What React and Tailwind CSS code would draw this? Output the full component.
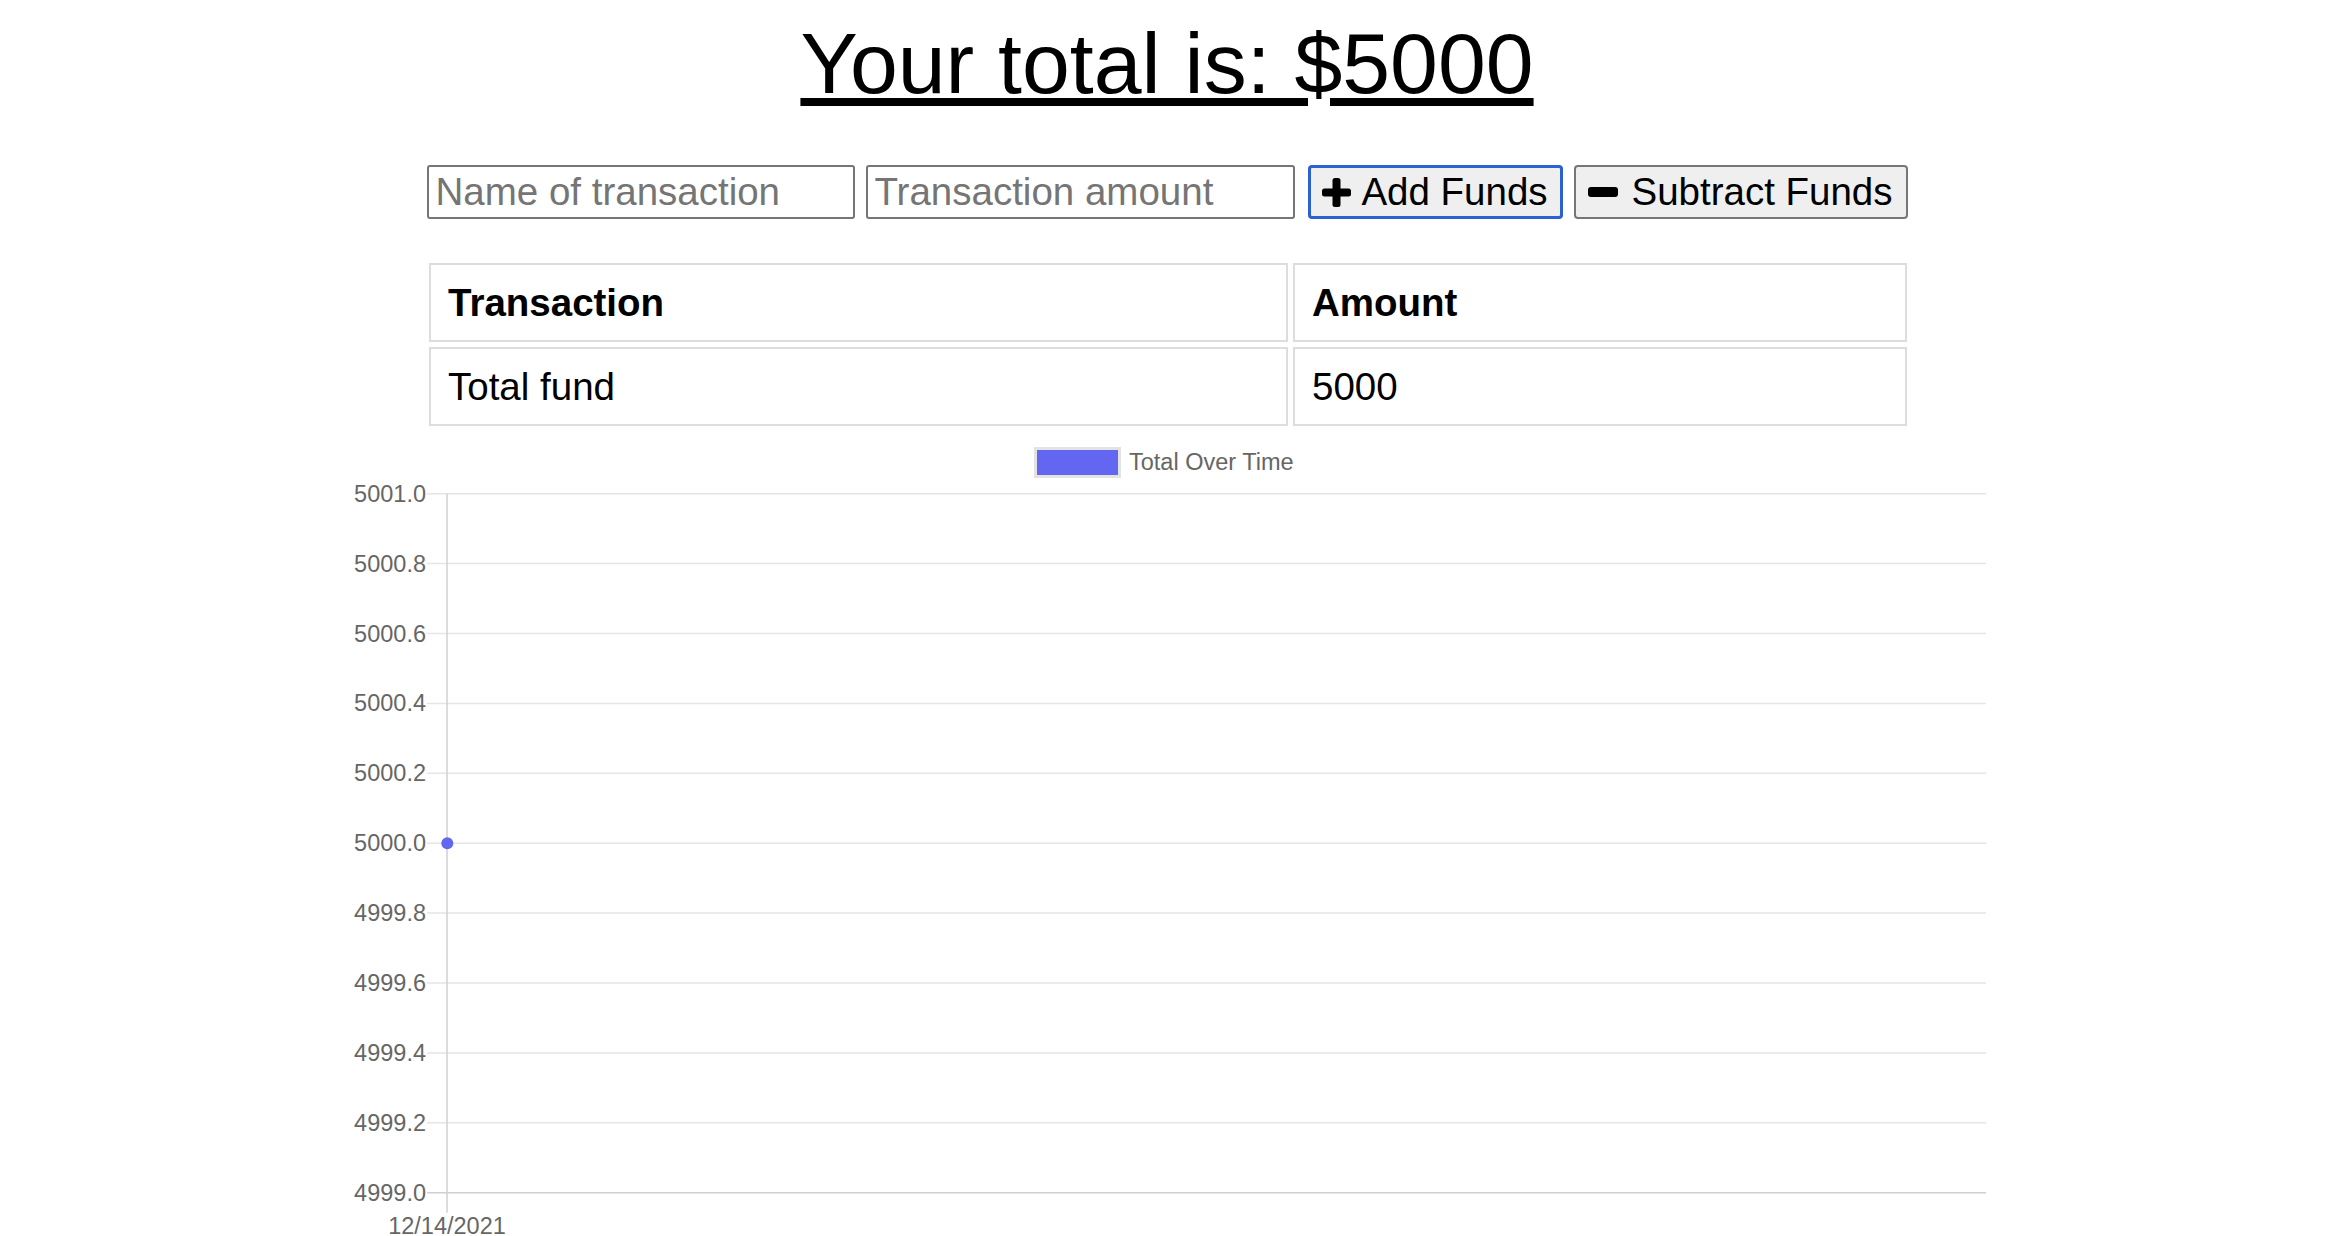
import React from "react";

const ticks = ["5001.0", "5000.8", "5000.6", "5000.4", "5000.2", "5000.0", "4999.8", "4999.6", "4999.4", "4999.2", "4999.0"];

const PlusIcon = () => (
  <svg width="29" height="29" viewBox="0 0 29 29" className="shrink-0">
    <rect x="0" y="10.5" width="29" height="8" rx="2.5" fill="#000" />
    <rect x="10.5" y="0" width="8" height="29" rx="2.5" fill="#000" />
  </svg>
);

const MinusIcon = () => (
  <svg width="30" height="10" viewBox="0 0 30 10" className="shrink-0">
    <rect x="0" y="0" width="30" height="10" rx="3" fill="#000" />
  </svg>
);

const Chart = () => {
  const top = 63.7;
  const step = 69.9;
  return (
    <svg width="1670" height="806" viewBox="0 0 1670 806" className="block">
      {/* legend */}
      <rect x="695.5" y="18.5" width="84" height="28" fill="#6366f1" stroke="#e3e3e3" strokeWidth="3" />
      <text x="789" y="40" fontSize="23.5" fill="#666" fontFamily="Liberation Sans, Arial, sans-serif">
        Total Over Time
      </text>

      {ticks.map((t, i) => {
        const y = top + i * step;
        const last = i === ticks.length - 1;
        return (
          <g key={t}>
            <line x1="87" x2="1646" y1={y} y2={y} stroke={last ? "#cfcfcf" : "#e5e5e5"} strokeWidth="1.5" />
            <text
              x="86"
              y={y + 8}
              textAnchor="end"
              fontSize="23.5"
              fill="#666"
              fontFamily="Liberation Sans, Arial, sans-serif"
            >
              {t}
            </text>
          </g>
        );
      })}

      <line x1="107" x2="107" y1={top} y2="782.7" stroke="#d0d0d0" strokeWidth="1.5" />

      <text x="107" y="803.5" textAnchor="middle" fontSize="23.5" fill="#666" fontFamily="Liberation Sans, Arial, sans-serif">
        12/14/2021
      </text>

      {/* data point */}
      <circle cx="107.3" cy={top + 5 * step} r="6" fill="#6366f1" />
    </svg>
  );
};

export default function App() {
  return (
    <div className="w-full h-[1236px] overflow-hidden bg-white text-black font-['Liberation_Sans',Arial,sans-serif]">
      <h1 className="mt-[14px] pr-[16px] text-center text-[86px] leading-[99px] font-normal underline">
        Your total is: $5000
      </h1>

      <div className="mt-[52px] flex justify-center items-center gap-[11px] pr-[16px]">
        <input
          type="text"
          placeholder="Name of transaction"
          className="w-[428px] h-[54px] border-2 border-[#767676] rounded-[3px] px-[7px] text-[38.5px] placeholder:text-[#757575] outline-none"
        />
        <input
          type="number"
          placeholder="Transaction amount"
          className="w-[429px] h-[54px] border-2 border-[#767676] rounded-[3px] px-[7px] text-[38.5px] placeholder:text-[#757575] outline-none"
        />
        <button className="ml-[2px] w-[255px] h-[54px] flex items-center justify-center gap-[10px] bg-[#efefef] border-[3px] border-[#2b62cf] rounded-[4px] text-[38.5px] leading-none">
          <PlusIcon />
          <span>Add Funds</span>
        </button>
        <button className="w-[334px] h-[54px] flex items-center justify-center gap-[13px] bg-[#efefef] border-2 border-[#767676] rounded-[4px] text-[38.5px] leading-none">
          <MinusIcon />
          <span>Subtract Funds</span>
        </button>
      </div>

      <div className="mt-[44px] flex justify-center pr-[14px]">
        <div className="grid grid-cols-[859px_614px] gap-[5px] text-[38.5px]">
          <div className="h-[79px] flex items-center border-2 border-[#dddddd] pl-[17px] font-bold">Transaction</div>
          <div className="h-[79px] flex items-center border-2 border-[#dddddd] pl-[17px] font-bold">Amount</div>
          <div className="h-[79px] flex items-center border-2 border-[#dddddd] pl-[17px]">Total fund</div>
          <div className="h-[79px] flex items-center border-2 border-[#dddddd] pl-[17px]">5000</div>
        </div>
      </div>

      <div className="mt-[4px] flex justify-center">
        <Chart />
      </div>
    </div>
  );
}
